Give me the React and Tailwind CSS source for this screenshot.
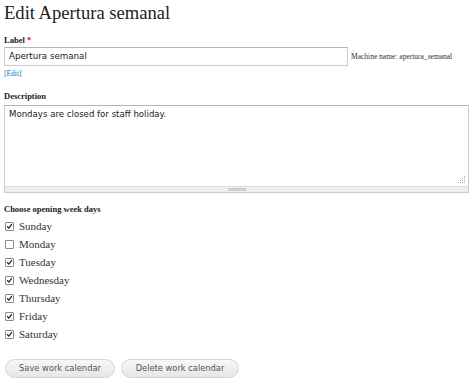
import { useState } from 'react';

const days = [
  ['Sunday', true],
  ['Monday', false],
  ['Tuesday', true],
  ['Wednesday', true],
  ['Thursday', true],
  ['Friday', true],
  ['Saturday', true],
];

function Box({ checked }) {
  return (
    <span className="w-[9px] h-[9px] border border-[#8a8a8a] bg-white flex items-center justify-center rounded-[1px]">
      {checked && (
        <svg width="9" height="9" viewBox="0 0 9 9" className="block">
          <path d="M1.5 4.2 L3.6 6.6 L7.6 1.4" fill="none" stroke="#222" strokeWidth="1.6" />
        </svg>
      )}
    </span>
  );
}

export default function App() {
  const [checks, setChecks] = useState(days.map((d) => d[1]));

  return (
    <div className="w-[474px] h-[384px] bg-white px-[4px] font-['Liberation_Serif',serif] text-[#333] overflow-hidden">
      <h1 className="text-[18.6px] leading-[24px] pt-[1px] text-[#222]">Edit Apertura semanal</h1>

      <div className="mt-[10px]">
        <div className="text-[8.5px] font-bold leading-[11px] text-[#222]">
          Label <span className="text-[#e00]">*</span>
        </div>
        <div className="flex items-center mt-[1px]">
          <div className="w-[344px] h-[19px] border border-[#ccc] border-t-[#b4b4b4] px-[4px] flex items-center text-[8.7px] font-['DejaVu_Sans',sans-serif] text-[#222]">
            Apertura semanal
          </div>
          <span className="ml-[3px] text-[7.5px] text-[#333]">Machine name: apertura_semanal</span>
        </div>
        <div className="text-[7.5px] text-[#0074bd] mt-[3px] leading-[10px]">[Edit]</div>
      </div>

      <div className="mt-[12px]">
        <div className="text-[8.5px] font-bold leading-[11px] text-[#222]">Description</div>
        <div className="mt-[3px] w-[465px] border border-[#ccc] border-t-[#b4b4b4]">
          <div className="relative h-[80px] px-[4px] pt-[2px] text-[8.6px] font-['DejaVu_Sans',sans-serif] text-[#222]">
            Mondays are closed for staff holiday.
            <svg width="8" height="8" viewBox="0 0 8 8" className="absolute right-[2px] bottom-[2px]">
              {[[6, 0], [6, 2], [4, 2], [6, 4], [4, 4], [2, 4], [6, 6], [4, 6], [2, 6], [0, 6]].map(([x, y], i) => (
                <rect key={i} x={x} y={y} width="1" height="1" fill="#aaa" />
              ))}
            </svg>
          </div>
          <div className="h-[6px] bg-[#eee] border-t border-[#ddd] flex justify-center items-center">
            <div className="w-[18px] h-[3px] bg-[#cfcfcf]" />
          </div>
        </div>
      </div>

      <div className="mt-[11px]">
        <div className="text-[8.5px] font-bold leading-[11px] text-[#222]">Choose opening week days</div>
        <div className="mt-[2px] flex flex-col">
          {days.map(([name], i) => (
            <label
              key={name}
              className="h-[18px] shrink-0 flex items-center gap-[5px] pl-[1px] text-[11px] leading-[18px] text-[#333] cursor-pointer"
              onClick={() => setChecks((c) => c.map((v, j) => (j === i ? !v : v)))}
            >
              <Box checked={checks[i]} />
              {name}
            </label>
          ))}
        </div>
      </div>

      <div className="mt-[16px] flex gap-[6px] pl-[1px]">
        <button className="h-[19px] w-[110px] rounded-full border border-[#d4d4d4] bg-gradient-to-b from-[#f8f8f8] to-[#e6e6e6] text-[8.3px] font-['DejaVu_Sans',sans-serif] text-[#555]">
          Save work calendar
        </button>
        <button className="h-[19px] w-[118px] rounded-full border border-[#d4d4d4] bg-gradient-to-b from-[#f8f8f8] to-[#e6e6e6] text-[8.3px] font-['DejaVu_Sans',sans-serif] text-[#555]">
          Delete work calendar
        </button>
      </div>
    </div>
  );
}
